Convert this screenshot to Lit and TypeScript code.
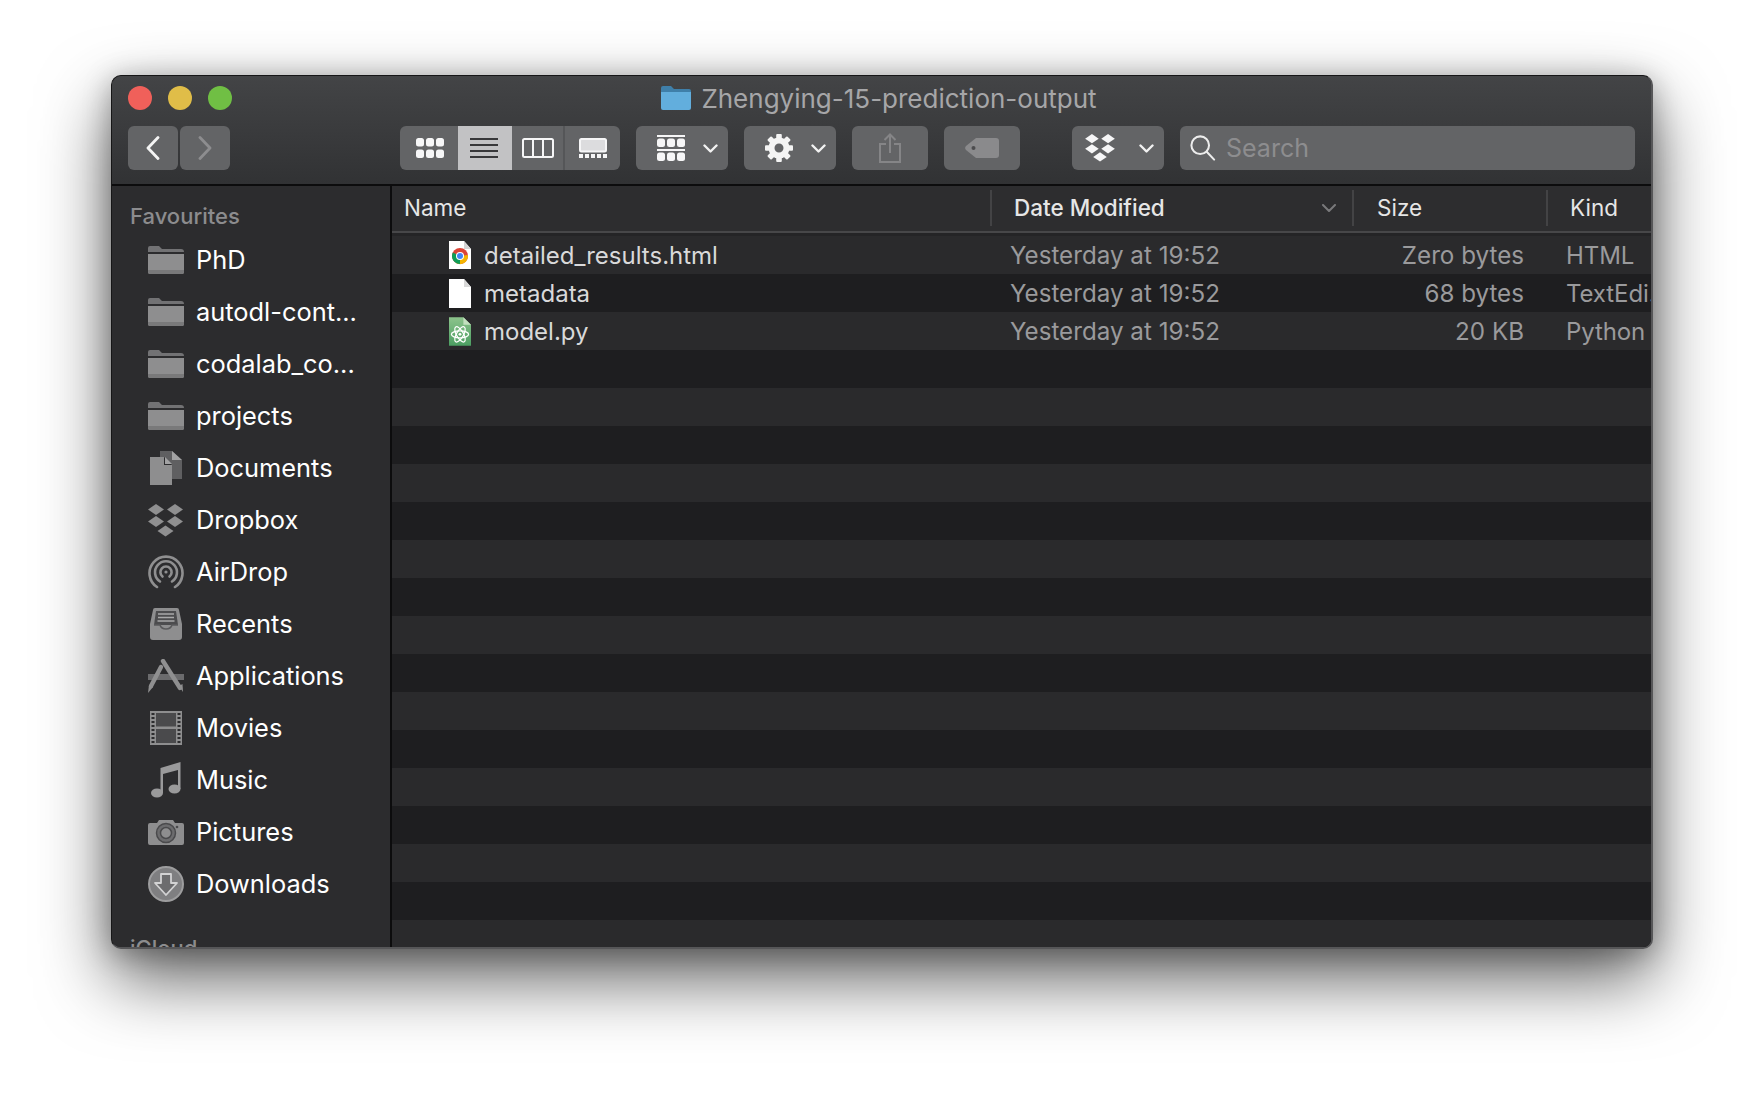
import { LitElement, html, svg, css } from 'lit';
import { customElement } from 'lit/decorators.js';

const dropbox = svg`<polygon points="8,0 16,5.5 8,11 0,5.5"/><polygon points="27,0 35,5.5 27,11 19,5.5"/><polygon points="8,12 16,17.5 8,23 0,17.5"/><polygon points="27,12 35,17.5 27,23 19,17.5"/><polygon points="17.5,21.5 25.5,27 17.5,32.5 9.5,27"/>`;

const folderIcon = html`<svg width="36" height="28" viewBox="0 0 36 28">
  <path d="M2 0H11L14 3H33a3 3 0 0 1 3 3V6H0V2a2 2 0 0 1 2-2Z" fill="#727274"/>
  <path d="M0 8H36V26a2 2 0 0 1-2 2H2a2 2 0 0 1-2-2Z" fill="#8e8e8f"/>
  <path d="M0 24H36V26a2 2 0 0 1-2 2H2a2 2 0 0 1-2-2Z" fill="#79797a"/>
</svg>`;

const sideIcons: Record<string, unknown> = {
  folder: folderIcon,
  documents: html`<svg width="32" height="34" viewBox="0 0 32 34">
    <path d="M10 0H22L32 9V28H22V14L14 6H10Z" fill="#5f5f61"/>
    <path d="M22 0L32 9H22Z" fill="#a2a2a3"/>
    <path d="M0 6H14V14H22V34H0Z" fill="#8e8e8f"/>
    <path d="M15 6L22 13H15Z" fill="#a2a2a3"/>
  </svg>`,
  dropbox: html`<svg width="36" height="33" viewBox="0 0 36 33" fill="#8f8f90">${dropbox}</svg>`,
  airdrop: html`<svg width="36" height="34" viewBox="0 0 36 34" fill="none" stroke="#8f8f90" stroke-width="2.6" stroke-linecap="round">
    <path d="M9 32A16.5 16.5 0 1 1 27 32"/>
    <path d="M12 26.5A11 11 0 1 1 24 26.5"/>
    <path d="M14.5 21.5A5.6 5.6 0 1 1 21.5 21.5"/>
    <circle cx="18" cy="17" r="1.6" fill="#8f8f90" stroke="none"/>
  </svg>`,
  recents: html`<svg width="32" height="32" viewBox="0 0 32 32">
    <path d="M5 0H27a2 2 0 0 1 2 2L32 16V29a3 3 0 0 1-3 3H3a3 3 0 0 1-3-3V16L3 2A2 2 0 0 1 5 0Z" fill="#8e8e8f"/>
    <path d="M6 3H26L28 17H4Z" fill="#4c4c4e"/>
    <path d="M8 6H24M8 9.500H24M7.500 13H24.500" stroke="#a8a8a9" stroke-width="1.6"/>
    <path d="M4 17H10C11 20 13 21 16 21S21 20 22 17H28" fill="none" stroke="#5a5a5c" stroke-width="1.6"/>
  </svg>`,
  applications: html`<svg width="36" height="34" viewBox="0 0 36 34">
    <rect x="0" y="15" width="36" height="6" fill="#6b6b6d"/>
    <path d="M15 2L32 29" stroke="#8f8f90" stroke-width="4.4" stroke-linecap="round"/>
    <path d="M31 27L35 33L34.500 25Z" fill="#8f8f90"/>
    <path d="M13 8L3 27" stroke="#8f8f90" stroke-width="4.400" stroke-linecap="round"/>
    <path d="M1 26L0 34L5 28Z" fill="#8f8f90"/>
  </svg>`,
  movies: html`<svg width="32" height="34" viewBox="0 0 32 34">
    <rect width="32" height="34" fill="#8e8e8f"/>
    <rect x="6" y="2" width="20" height="13.500" fill="#4a4a4c"/>
    <rect x="6" y="18" width="20" height="14" fill="#4a4a4c"/>
    <path d="M1.500 3H4.500M1.500 7H4.500M1.500 11H4.500M1.500 15H4.500M1.500 19H4.500M1.500 23H4.500M1.500 27H4.500M1.500 31H4.500M27.500 3H30.500M27.500 7H30.500M27.500 11H30.500M27.500 15H30.500M27.500 19H30.500M27.500 23H30.500M27.500 27H30.500M27.500 31H30.500" stroke="#2c2c2e" stroke-width="2"/>
  </svg>`,
  music: html`<svg width="30" height="36" viewBox="0 0 30 36" fill="#9a9a9b">
    <ellipse cx="6" cy="31" rx="6" ry="4.600"/>
    <ellipse cx="23.500" cy="27" rx="6" ry="4.600"/>
    <path d="M9.500 31V6L29.500 0V27H27V8L12 12V31Z"/>
  </svg>`,
  pictures: html`<svg width="36" height="26" viewBox="0 0 36 26">
    <path d="M2 4H9L11 1H25L27 4H34a2 2 0 0 1 2 2V24a2 2 0 0 1-2 2H2a2 2 0 0 1-2-2V6A2 2 0 0 1 2 4Z" fill="#8e8e8f"/>
    <circle cx="18" cy="14" r="9.500" fill="#6c6c6e" stroke="#4a4a4c" stroke-width="1.500"/>
    <circle cx="18" cy="14" r="5.500" fill="#8e8e8f" stroke="#4a4a4c" stroke-width="1.500"/>
    <circle cx="29" cy="8" r="1.300" fill="#4a4a4c"/>
  </svg>`,
  downloads: html`<svg width="36" height="36" viewBox="0 0 36 36">
    <circle cx="18" cy="18" r="17" fill="#7f7f81" stroke="#9d9d9e" stroke-width="2"/>
    <path d="M13 8H23V17H29L18 29L7 17H13Z" fill="#6c6c6e" stroke="#d2d2d3" stroke-width="1.800" stroke-linejoin="round"/>
  </svg>`,
};

const chevronDown = html`<svg class="chev" width="15" height="9" viewBox="0 0 15 9" fill="none" stroke="#f2f2f2" stroke-width="2.400" stroke-linecap="round" stroke-linejoin="round"><path d="M1.500 1.500L7.500 7.500L13.500 1.500"/></svg>`;

const gear = html`<svg width="28" height="28" viewBox="0 0 28 28" fill="#f4f4f4">
  ${[0, 45, 90, 135, 180, 225, 270, 315].map(
    (a) => svg`<rect x="11.200" y="0" width="5.600" height="7" rx="1" transform="rotate(${a} 14 14)"/>`
  )}
  <circle cx="14" cy="14" r="7.500" fill="none" stroke="#f4f4f4" stroke-width="6"/>
</svg>`;

const sidebarItems = [
  { icon: 'folder', label: 'PhD' },
  { icon: 'folder', label: 'autodl-cont...' },
  { icon: 'folder', label: 'codalab_co...' },
  { icon: 'folder', label: 'projects' },
  { icon: 'documents', label: 'Documents' },
  { icon: 'dropbox', label: 'Dropbox' },
  { icon: 'airdrop', label: 'AirDrop' },
  { icon: 'recents', label: 'Recents' },
  { icon: 'applications', label: 'Applications' },
  { icon: 'movies', label: 'Movies' },
  { icon: 'music', label: 'Music' },
  { icon: 'pictures', label: 'Pictures' },
  { icon: 'downloads', label: 'Downloads' },
];

const chromeFile = html`<svg width="22" height="29" viewBox="0 0 22 29">
  <path d="M0 0H15L22 8V28H0Z" fill="#fff"/>
  <path d="M15 0L22 8H15Z" fill="#d4d4d4"/>
  <circle cx="11" cy="15" r="8" fill="#db4437"/>
  <path d="M11 15L18.900 14A8 8 0 0 1 7 22Z" fill="#f4b400"/>
  <path d="M11 15L3.800 11.500A8 8 0 0 0 11 23Z" fill="#0f9d58"/>
  <circle cx="11" cy="15" r="4" fill="#fff"/>
  <circle cx="11" cy="15" r="3" fill="#4285f4"/>
</svg>`;
const plainFile = html`<svg width="22" height="29" viewBox="0 0 22 29">
  <path d="M0 0H15L22 8V29H0Z" fill="#fff"/>
  <path d="M15 0L22 8H15Z" fill="#d8d8d8"/>
</svg>`;
const pythonFile = html`<svg width="22" height="29" viewBox="0 0 23 30">
  <defs><linearGradient id="pyg" x1="0" y1="0" x2="0" y2="1"><stop offset="0" stop-color="#8dc48c"/><stop offset="1" stop-color="#4b9e62"/></linearGradient></defs>
  <path d="M0 0H15L23 8V30H0Z" fill="url(#pyg)"/>
  <path d="M15 0L23 8H15Z" fill="#c3e0bf"/>
  <g fill="none" stroke="#fff" stroke-width="1.300">
    <ellipse cx="11.500" cy="18" rx="9" ry="3.600"/>
    <ellipse cx="11.500" cy="18" rx="9" ry="3.600" transform="rotate(60 11.500 18)"/>
    <ellipse cx="11.500" cy="18" rx="9" ry="3.600" transform="rotate(120 11.500 18)"/>
  </g>
  <circle cx="11.500" cy="18" r="1.500" fill="#fff"/>
</svg>`;

const files = [
  { icon: chromeFile, name: 'detailed_results.html', date: 'Yesterday at 19:52', size: 'Zero bytes', kind: 'HTML' },
  { icon: plainFile, name: 'metadata', date: 'Yesterday at 19:52', size: '68 bytes', kind: 'TextEdi…' },
  { icon: pythonFile, name: 'model.py', date: 'Yesterday at 19:52', size: '20 KB', kind: 'Python' },
];

@customElement('app-root')
export class AppRoot extends LitElement {
  static styles = css`
    :host {
      display: block;
      box-sizing: border-box;
      height: 1096px;
      padding: 75px 111px 147px;
      background: #fff;
      font-family: Inter, Roboto, 'Liberation Sans', sans-serif;
    }

    .window {
      box-sizing: border-box;
      height: 874px;
      display: flex;
      flex-direction: column;
      overflow: hidden;
      border-radius: 10px;
      border: 1px solid #161617;
      border-right: 2px solid #565658;
      border-bottom: 2px solid #565658;
      background: #2c2c2e;
      box-shadow: 0 30px 70px rgba(0, 0, 0, 0.62), 0 4px 28px rgba(0, 0, 0, 0.28);
    }

    .toolbar {
      box-sizing: border-box;
      height: 110px;
      flex: none;
      background: linear-gradient(#434446, #313234);
      border-bottom: 2px solid #0c0c0d;
    }

    .titlebar {
      height: 44px;
      display: grid;
      grid-template-columns: 1fr auto 1fr;
      align-items: center;
      padding: 0 16px;
    }
    .lights {
      display: flex;
      gap: 16px;
    }
    .light {
      width: 24px;
      height: 24px;
      border-radius: 50%;
    }
    .red { background: #f0605a; }
    .yellow { background: #e0bd48; }
    .green { background: #70bf44; }

    .title {
      display: flex;
      align-items: center;
      gap: 10px;
      margin-right: 5px;
      color: #a6a6a8;
      font-size: 26px;
      white-space: nowrap;
    }

    .buttons {
      display: flex;
      align-items: stretch;
      height: 44px;
      margin-top: 6px;
      padding: 0 16px;
    }

    .btn {
      display: flex;
      align-items: center;
      justify-content: center;
      background: #636466;
      border-radius: 6px;
    }
    .nav { gap: 2px; display: flex; margin-right: 170px; }
    .nav .btn { width: 50px; }
    .seg { display: flex; width: 220px; background: #636466; border-radius: 6px; overflow: hidden; }
    .seg > div { display: flex; align-items: center; justify-content: center; box-sizing: border-box; }
    .seg .a { width: 58px; padding-left: 2px; }
    .seg .b { width: 54px; padding-right: 2px; background: #c2c2c4; }
    .seg .c { width: 53px; border-right: 2px solid #555658; }
    .seg .d { flex: 1; }

    .drop { width: 92px; margin-left: 16px; gap: 18px; padding-left: 10px; box-sizing: border-box; }
    .plain { width: 76px; margin-left: 16px; }
    .dropbox-btn { margin-left: 52px; gap: 23px; padding-left: 2px; }

    .search {
      flex: 1;
      margin-left: 16px;
      display: flex;
      align-items: center;
      gap: 10px;
      padding-left: 10px;
      background: #636466;
      border-radius: 6px;
      color: #8d8d8f;
      font-size: 25px;
    }

    .body {
      flex: 1;
      min-height: 0;
      display: flex;
    }

    .sidebar {
      box-sizing: border-box;
      width: 280px;
      flex: none;
      padding: 17px 0 0 18px;
      overflow: hidden;
      background: #2c2c2e;
      border-right: 2px solid #0c0c0d;
    }
    .section {
      height: 26px;
      line-height: 26px;
      color: #8c8c8e;
      font-size: 22px;
      font-weight: 500;
    }
    .items { margin-top: 5px; }
    .icloud { margin-top: 25px; }
    .item {
      display: flex;
      align-items: center;
      height: 52px;
      color: #fff;
      font-size: 25.400px;
      line-height: 32px;
      white-space: nowrap;
    }
    .ico {
      width: 36px;
      margin-left: 18px;
      margin-right: 12px;
      display: flex;
      justify-content: center;
    }

    .main {
      flex: 1;
      min-width: 0;
      overflow: hidden;
      background: #1e1e20;
    }

    .head, .row {
      display: grid;
      grid-template-columns: 598px 362px 194px 1fr;
      align-items: center;
    }
    .head {
      box-sizing: border-box;
      height: 47px;
      padding: 4px 0 5px;
      background: #2d2d2f;
      border-bottom: 2px solid #474749;
      color: #e6e6e6;
      font-size: 22.500px;
    }
    .hcell {
      height: 36px;
      line-height: 36px;
      display: flex;
      align-items: center;
      justify-content: space-between;
    }
    .hcell.name { padding-left: 12px; }
    .hcell.date { padding: 0 16px 0 22px; border-left: 2px solid #434345; font-weight: 500; }
    .hcell.size { padding-left: 23px; border-left: 2px solid #434345; }
    .hcell.kind { padding-left: 22px; border-left: 2px solid #434345; }
    .strip { height: 3px; background: #242426; }

    .row {
      height: 38px;
      color: #9a9a9c;
      font-size: 24.200px;
      white-space: nowrap;
      background: #1e1e20;
    }
    .row:nth-child(odd) { background: #2a2a2c; }
    .cell-name {
      display: flex;
      align-items: center;
      gap: 13px;
      padding-left: 57px;
      color: #d9d9da;
      font-size: 24px;
    }
    .cell-name svg { flex: none; }
    .cell-date { padding-left: 20px; }
    .cell-size { text-align: right; padding-right: 22px; }
    .cell-kind { padding-left: 20px; overflow: hidden; font-size: 24px; letter-spacing: -0.1px; }
  `;

  render() {
    const empties = Array.from({ length: 16 });
    return html`
      <div class="window">
        <div class="toolbar">
          <div class="titlebar">
            <div class="lights">
              <div class="light red"></div>
              <div class="light yellow"></div>
              <div class="light green"></div>
            </div>
            <div class="title">
              <svg width="30" height="24" viewBox="0 0 30 24">
                <path d="M2 0H10L13 3H28a2 2 0 0 1 2 2V8H0V2A2 2 0 0 1 2 0Z" fill="#3f7fa9"/>
                <path d="M0 6H30V22a2 2 0 0 1-2 2H2a2 2 0 0 1-2-2Z" fill="#62aedd"/>
              </svg>
              Zhengying-15-prediction-output
            </div>
            <div></div>
          </div>
          <div class="buttons">
            <div class="nav">
              <div class="btn"><svg width="14" height="24" viewBox="0 0 14 24" fill="none" stroke="#f4f4f4" stroke-width="2.800" stroke-linecap="round" stroke-linejoin="round"><path d="M12 1.500L2 12L12 22.500"/></svg></div>
              <div class="btn"><svg width="14" height="24" viewBox="0 0 14 24" fill="none" stroke="#8d8d8f" stroke-width="2.800" stroke-linecap="round" stroke-linejoin="round"><path d="M2 1.500L12 12L2 22.500"/></svg></div>
            </div>
            <div class="seg">
              <div class="a"><svg width="28" height="20" viewBox="0 0 28 20" fill="#f6f6f7">
                ${[0, 10, 20].map((x) => svg`<rect x=${x} y="0" width="8" height="8.500" rx="2.500"/><rect x=${x} y="11.500" width="8" height="8.500" rx="2.500"/>`)}
              </svg></div>
              <div class="b"><svg width="28" height="20" viewBox="0 0 28 20" stroke="#38383a" stroke-width="2"><path d="M0 1H28M0 7H28M0 13H28M0 19H28"/></svg></div>
              <div class="c"><svg width="32" height="20" viewBox="0 0 32 20" fill="none" stroke="#f6f6f7" stroke-width="2"><rect x="1" y="1" width="30" height="18" rx="1.500"/><path d="M11 1V19M21 1V19"/></svg></div>
              <div class="d"><svg width="28" height="20" viewBox="0 0 28 20">
                <rect x="1" y="1" width="26" height="12.500" rx="1.500" fill="#dcdcde" stroke="#f6f6f7" stroke-width="2"/>
                <path d="M0 18H4M6 18H10M12 18H16M18 18H22M24 18H28" stroke="#f6f6f7" stroke-width="4"/>
              </svg></div>
            </div>
            <div class="btn drop">
              <svg width="28" height="26" viewBox="0 0 28 26" fill="#f6f6f7">
                <rect x="0" y="0" width="28" height="2"/>
                <rect x="0" y="3.500" width="8" height="8.500" rx="2.500"/><rect x="10" y="3.500" width="8" height="8.500" rx="2.500"/><rect x="20" y="3.500" width="8" height="8.500" rx="2.500"/>
                <rect x="0" y="14" width="28" height="2"/>
                <rect x="0" y="17.500" width="8" height="8.500" rx="2.500"/><rect x="10" y="17.500" width="8" height="8.500" rx="2.500"/><rect x="20" y="17.500" width="8" height="8.500" rx="2.500"/>
              </svg>
              ${chevronDown}
            </div>
            <div class="btn drop">${gear}${chevronDown}</div>
            <div class="btn plain">
              <svg width="22" height="30" viewBox="0 0 22 30" fill="none" stroke="#858587" stroke-width="2">
                <path d="M7 11H1V29H21V11H15"/>
                <path d="M11 20V2M5.500 7L11 1.500L16.500 7"/>
              </svg>
            </div>
            <div class="btn plain">
              <svg width="34" height="20" viewBox="0 0 34 20">
                <path d="M11 0H31a3 3 0 0 1 3 3V17a3 3 0 0 1-3 3H11L1 12a3 3 0 0 1 0-4Z" fill="#8a8a8c"/>
                <circle cx="8.500" cy="10" r="2" fill="#4c4c4e"/>
              </svg>
            </div>
            <div class="btn drop dropbox-btn">
              <svg width="32" height="28" viewBox="0 0 35 33" fill="#f6f6f7">${dropbox}</svg>
              ${chevronDown}
            </div>
            <div class="search">
              <svg width="26" height="26" viewBox="0 0 28 28" fill="none" stroke="#ececec" stroke-width="2.200" stroke-linecap="round">
                <circle cx="11" cy="11" r="9.500"/><path d="M18 18L26 26.500"/>
              </svg>
              Search
            </div>
          </div>
        </div>
        <div class="body">
          <div class="sidebar">
            <div class="section">Favourites</div>
            <div class="items">
              ${sidebarItems.map(
                (it) => html`<div class="item"><span class="ico">${sideIcons[it.icon]}</span>${it.label}</div>`
              )}
            </div>
            <div class="section icloud">iCloud</div>
          </div>
          <div class="main">
            <div class="head">
              <div class="hcell name">Name</div>
              <div class="hcell date">Date Modified
                <svg width="14" height="8" viewBox="0 0 14 8" fill="none" stroke="#79797b" stroke-width="2" stroke-linecap="round" stroke-linejoin="round"><path d="M1 1L7 7L13 1"/></svg>
              </div>
              <div class="hcell size">Size</div>
              <div class="hcell kind">Kind</div>
            </div>
            <div class="strip"></div>
            <div>
              ${files.map(
                (f) => html`<div class="row">
                  <div class="cell-name">${f.icon}${f.name}</div>
                  <div class="cell-date">${f.date}</div>
                  <div class="cell-size">${f.size}</div>
                  <div class="cell-kind">${f.kind}</div>
                </div>`
              )}
              ${empties.map(() => html`<div class="row"></div>`)}
            </div>
          </div>
        </div>
      </div>
    `;
  }
}
